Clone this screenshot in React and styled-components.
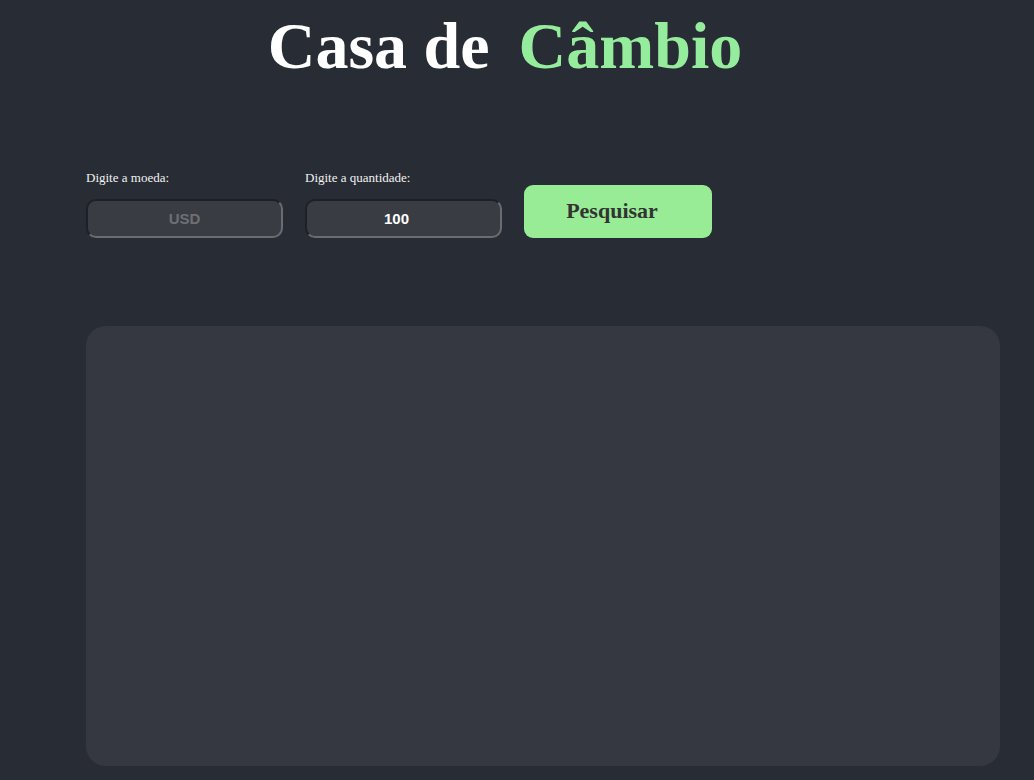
import React from "react";
import styled, { createGlobalStyle } from "styled-components";

const Global = createGlobalStyle`
  html, body { margin: 0; padding: 0; background: #282c34; }
  body { font-family: "Liberation Serif", "Times New Roman", serif; color: #fff; }
  * { box-sizing: border-box; }
`;

const Page = styled.div`
  min-height: 780px;
  padding: 0 34px 14px 86px;
  display: flex;
  flex-direction: column;
`;

const Title = styled.h1`
  margin: 8px 0 0 -76px;
  display: flex;
  justify-content: center;
  gap: 29px;
  font-size: 66px;
  line-height: 76px;
  font-weight: 700;
  color: #fff;
`;

const Accent = styled.span`
  color: #95ec9d;
`;

const Form = styled.form`
  margin-top: 86px;
  display: flex;
  align-items: flex-end;
  gap: 22px;
`;

const Field = styled.label`
  display: flex;
  flex-direction: column;
  gap: 13px;
  font-size: 13px;
  color: #f2f2f2;
`;

const Input = styled.input`
  width: 197px;
  height: 39px;
  border-radius: 10px;
  border: 2px solid;
  border-color: #1e2025 #6b6c70 #6b6c70 #1e2025;
  background: #3a3c44;
  color: #fff;
  font-family: "Liberation Sans", Arial, sans-serif;
  font-weight: 700;
  font-size: 15px;
  text-align: center;
  outline: none;
  &::placeholder { color: #6e6f73; }
  &[type="number"] { padding-right: 16px; }
  &::-webkit-inner-spin-button,
  &::-webkit-outer-spin-button { -webkit-appearance: none; margin: 0; }
`;

const Button = styled.button`
  width: 188px;
  height: 53px;
  padding: 0 12px 2px 0;
  border: none;
  border-radius: 9px;
  background: #97ec95;
  color: #333;
  font-family: "Liberation Serif", "Times New Roman", serif;
  font-weight: 700;
  font-size: 22px;
  cursor: pointer;
`;

const Panel = styled.section`
  margin-top: 88px;
  height: 440px;
  width: 914px;
  border-radius: 20px;
  background: #353841;
`;

export default function App() {
  return (
    <>
      <Global />
      <Page>
        <Title>
          <span>Casa de</span>
          <Accent>Câmbio</Accent>
        </Title>
        <Form onSubmit={(e) => e.preventDefault()}>
          <Field>
            Digite a moeda:
            <Input placeholder="USD" />
          </Field>
          <Field>
            Digite a quantidade:
            <Input type="number" defaultValue="100" />
          </Field>
          <Button type="submit">Pesquisar</Button>
        </Form>
        <Panel />
      </Page>
    </>
  );
}
